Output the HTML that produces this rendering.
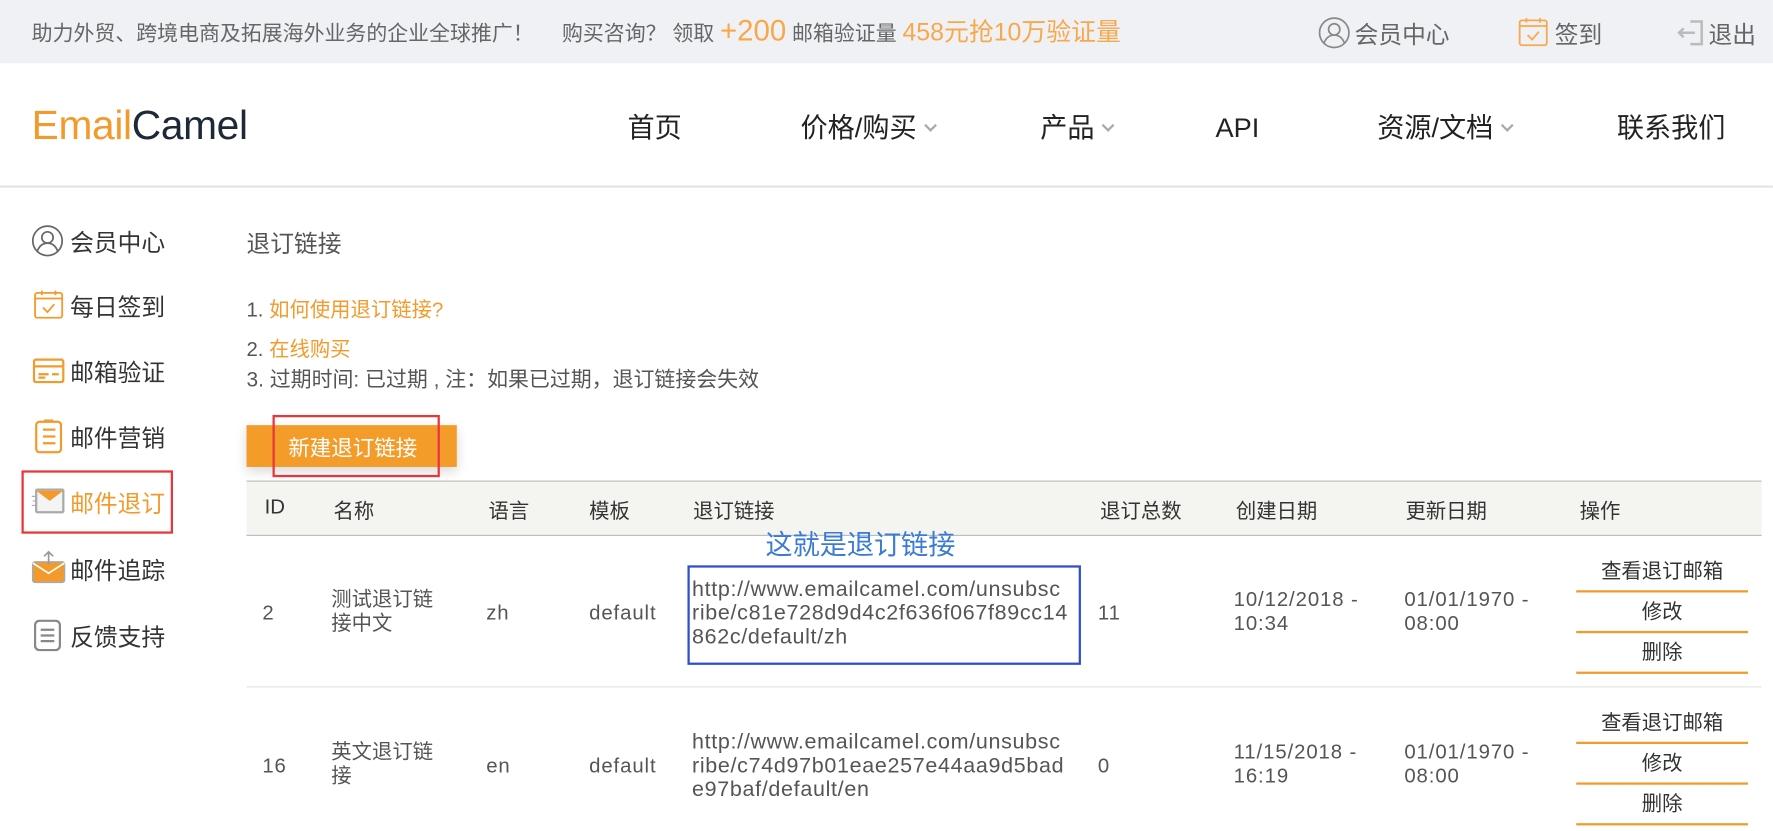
<!DOCTYPE html>
<html><head><meta charset="utf-8"><style>
*{margin:0;padding:0;box-sizing:border-box}
html,body{width:1773px;height:831px;overflow:hidden;background:#fff}
#w{position:absolute;left:0;top:0;width:1568px;height:735px;transform:scale(1.1307);transform-origin:0 0;font-family:"Liberation Sans","Noto Sans CJK SC",sans-serif;color:#555}
.a{position:absolute;white-space:nowrap}
.top{position:absolute;left:0;top:0;width:1568px;height:56px;background:#f0f1f5}
.nav{font-size:24px;color:#222;top:98px;line-height:32px}
.chev{display:inline-block;width:8px;height:8px;border-right:2px solid #aaa;border-bottom:2px solid #aaa;transform:rotate(45deg);margin-left:8px;vertical-align:6px}
.side{font-size:21px;color:#333;left:62px}
.o{color:#f39a2b}
.th{font-size:18px;color:#333;top:438px}
.td{font-size:18px;color:#555;line-height:21px}
.l{letter-spacing:0.8px}
.lk{font-size:19px;letter-spacing:0.6px}
.act{position:absolute;left:1394px;width:152px;text-align:center;font-size:18px;color:#333;border-bottom:2px solid #f39a2b;height:36px;line-height:34px}
</style></head><body><div id="w">
<div class="top"></div>
<div class="a" style="left:28px;top:16px;font-size:18.5px;color:#666">助力外贸、跨境电商及拓展海外业务的企业全球推广！</div>
<div class="a" style="left:497px;top:12px;font-size:18.5px;color:#666;line-height:30px">购买咨询？ 领取 <span style="color:#f8a84a;font-size:26px">+200</span> 邮箱验证量 <span style="color:#f8a84a;font-size:22px">458元抢10万验证量</span></div>
<svg class="a" style="left:1166px;top:15px" width="28" height="28" viewBox="0 0 28 28" fill="none" stroke="#888" stroke-width="1.5"><circle cx="14" cy="14" r="13"/><circle cx="14" cy="11" r="5"/><path d="M5 23c2-5 5-7 9-7s7 2 9 7"/></svg>
<div class="a" style="left:1198px;top:15px;font-size:21px;color:#666">会员中心</div>
<svg class="a" style="left:1343px;top:15px" width="26" height="26" viewBox="0 0 26 26" fill="none" stroke="#f8a84a" stroke-width="1.6"><rect x="1" y="3" width="24" height="22" rx="2"/><path d="M1 8h24M7 1v4M19 1v4M8 16l4 4 6-7"/></svg>
<div class="a" style="left:1375px;top:15px;font-size:21px;color:#666">签到</div>
<svg class="a" style="left:1483px;top:17px" width="26" height="24" viewBox="0 0 26 24" fill="none" stroke="#bbb" stroke-width="2.2"><path d="M12 2h10v20H12M2 12h14M6 8l-4 4 4 4"/></svg>
<div class="a" style="left:1511px;top:15px;font-size:21px;color:#666">退出</div>

<div class="a" style="left:28px;top:90px;font-size:36px;color:#1d2838;letter-spacing:-0.3px"><span class="o">Email</span>Camel</div>
<div class="a nav" style="left:555px">首页</div>
<div class="a nav" style="left:708px">价格/购买<span class="chev"></span></div>
<div class="a nav" style="left:920px">产品<span class="chev"></span></div>
<div class="a nav" style="left:1075px">API</div>
<div class="a nav" style="left:1218px">资源/文档<span class="chev"></span></div>
<div class="a nav" style="left:1430px">联系我们</div>
<div class="a" style="left:0;top:164px;width:1568px;height:2px;background:#e4e4e4"></div>

<svg class="a" style="left:28px;top:199px" width="28" height="28" viewBox="0 0 28 28" fill="none" stroke="#666" stroke-width="1.5"><circle cx="14" cy="14" r="13"/><circle cx="14" cy="11" r="5"/><path d="M5 23c2-5 5-7 9-7s7 2 9 7"/></svg>
<div class="a side" style="top:199px">会员中心</div>
<svg class="a" style="left:30px;top:256px" width="26" height="26" viewBox="0 0 26 26" fill="none" stroke="#f39a2b" stroke-width="1.6"><rect x="1" y="3" width="24" height="22" rx="2"/><path d="M1 8h24M7 1v4M19 1v4M8 16l4 4 6-7"/></svg>
<div class="a side" style="top:256px">每日签到</div>
<svg class="a" style="left:29px;top:317px" width="28" height="22" viewBox="0 0 28 22" fill="none" stroke="#f39a2b" stroke-width="2"><rect x="1" y="1" width="26" height="20" rx="2"/><path d="M1 7h26M5 14h9M5 17h6M17 14h6"/></svg>
<div class="a side" style="top:314px">邮箱验证</div>
<svg class="a" style="left:31px;top:371px" width="24" height="30" viewBox="0 0 24 30" fill="none" stroke="#f39a2b" stroke-width="2"><rect x="1" y="2" width="22" height="27" rx="3"/><path d="M8 1h8M7 9h11M7 15h11M7 21h11" /></svg>
<div class="a side" style="top:372px">邮件营销</div>
<svg class="a" style="left:28px;top:431px" width="30" height="24" viewBox="0 0 30 24"><rect x="4" y="2" width="24" height="20" rx="1" fill="#f4f4f4" stroke="#aaa" stroke-width="2"/><path d="M4 3l12 9 12-9z" fill="#f39a2b"/><path d="M0 8h4M1 12h3M0 16h4" stroke="#aaa"/></svg>
<div class="a side" style="top:430px;color:#f39a2b">邮件退订</div>
<div class="a" style="left:19px;top:416px;width:134px;height:56px;border:2px solid #e8373a"></div>
<svg class="a" style="left:27px;top:487px" width="32" height="30" viewBox="0 0 32 30"><rect x="2" y="10" width="28" height="18" rx="2" fill="#f39a2b" stroke="#aaa" stroke-width="1.5"/><path d="M2 11l14 9 14-9" fill="none" stroke="#fff" stroke-width="1.5"/><path d="M16 12V1M12 5l4-4 4 4" fill="none" stroke="#999" stroke-width="1.5"/></svg>
<div class="a side" style="top:489px">邮件追踪</div>
<svg class="a" style="left:30px;top:548px" width="24" height="28" viewBox="0 0 24 28" fill="none" stroke="#888" stroke-width="2"><rect x="1" y="1" width="22" height="26" rx="4"/><path d="M6 9h12M6 14h12M6 19h12"/></svg>
<div class="a side" style="top:548px">反馈支持</div>

<div class="a" style="left:218px;top:200px;font-size:21px;color:#555">退订链接</div>
<div class="a" style="left:218px;top:260px;font-size:18px;color:#555">1. <span class="o">如何使用退订链接?</span></div>
<div class="a" style="left:218px;top:295px;font-size:18px;color:#555">2. <span class="o">在线购买</span></div>
<div class="a" style="left:218px;top:322px;font-size:18.5px;color:#555">3. 过期时间: 已过期 , 注：如果已过期，退订链接会失效</div>
<div class="a" style="left:218px;top:376px;width:186px;height:37px;background:#f49c2a;box-shadow:0 4px 10px rgba(0,0,0,.15)"></div>
<div class="a" style="left:255px;top:382px;font-size:19px;color:#fff">新建退订链接</div>
<div class="a" style="left:241px;top:367px;width:148px;height:55px;border:2px solid #e8373a"></div>

<div class="a" style="left:218px;top:425px;width:1340px;height:49px;background:#f4f4f0;border-top:1px solid #bbb;border-bottom:1px solid #bbb"></div>
<div class="a th" style="left:234px">ID</div>
<div class="a th" style="left:295px">名称</div>
<div class="a th" style="left:432px">语言</div>
<div class="a th" style="left:521px">模板</div>
<div class="a th" style="left:613px">退订链接</div>
<div class="a th" style="left:973px">退订总数</div>
<div class="a th" style="left:1093px">创建日期</div>
<div class="a th" style="left:1243px">更新日期</div>
<div class="a th" style="left:1397px">操作</div>
<div class="a" style="left:677px;top:462px;font-size:24px;color:#3a7bd5">这就是退订链接</div>

<div class="a td l" style="left:232px;top:532px">2</div>
<div class="a td" style="left:293px;top:520px">测试退订链<br>接中文</div>
<div class="a td l" style="left:430px;top:532px">zh</div>
<div class="a td l" style="left:521px;top:532px">default</div>
<div class="a td lk" style="left:612px;top:511px">http://www.emailcamel.com/unsubsc<br>ribe/c81e728d9d4c2f636f067f89cc14<br>862c/default/zh</div>
<div class="a" style="left:608px;top:500px;width:348px;height:88px;border:2px solid #2d4fc9"></div>
<div class="a td l" style="left:971px;top:532px">11</div>
<div class="a td l" style="left:1091px;top:520px">10/12/2018 -<br>10:34</div>
<div class="a td l" style="left:1242px;top:520px">01/01/1970 -<br>08:00</div>
<div class="act" style="top:488px">查看退订邮箱</div>
<div class="act" style="top:524px">修改</div>
<div class="act" style="top:560px">删除</div>
<div class="a" style="left:218px;top:607px;width:1340px;height:1px;background:#e4e4e4"></div>

<div class="a td l" style="left:232px;top:667px">16</div>
<div class="a td" style="left:293px;top:655px">英文退订链<br>接</div>
<div class="a td l" style="left:430px;top:667px">en</div>
<div class="a td l" style="left:521px;top:667px">default</div>
<div class="a td lk" style="left:612px;top:646px">http://www.emailcamel.com/unsubsc<br>ribe/c74d97b01eae257e44aa9d5bad<br>e97baf/default/en</div>
<div class="a td l" style="left:971px;top:667px">0</div>
<div class="a td l" style="left:1091px;top:655px">11/15/2018 -<br>16:19</div>
<div class="a td l" style="left:1242px;top:655px">01/01/1970 -<br>08:00</div>
<div class="act" style="top:622px">查看退订邮箱</div>
<div class="act" style="top:658px">修改</div>
<div class="act" style="top:694px">删除</div>
</div></body></html>
